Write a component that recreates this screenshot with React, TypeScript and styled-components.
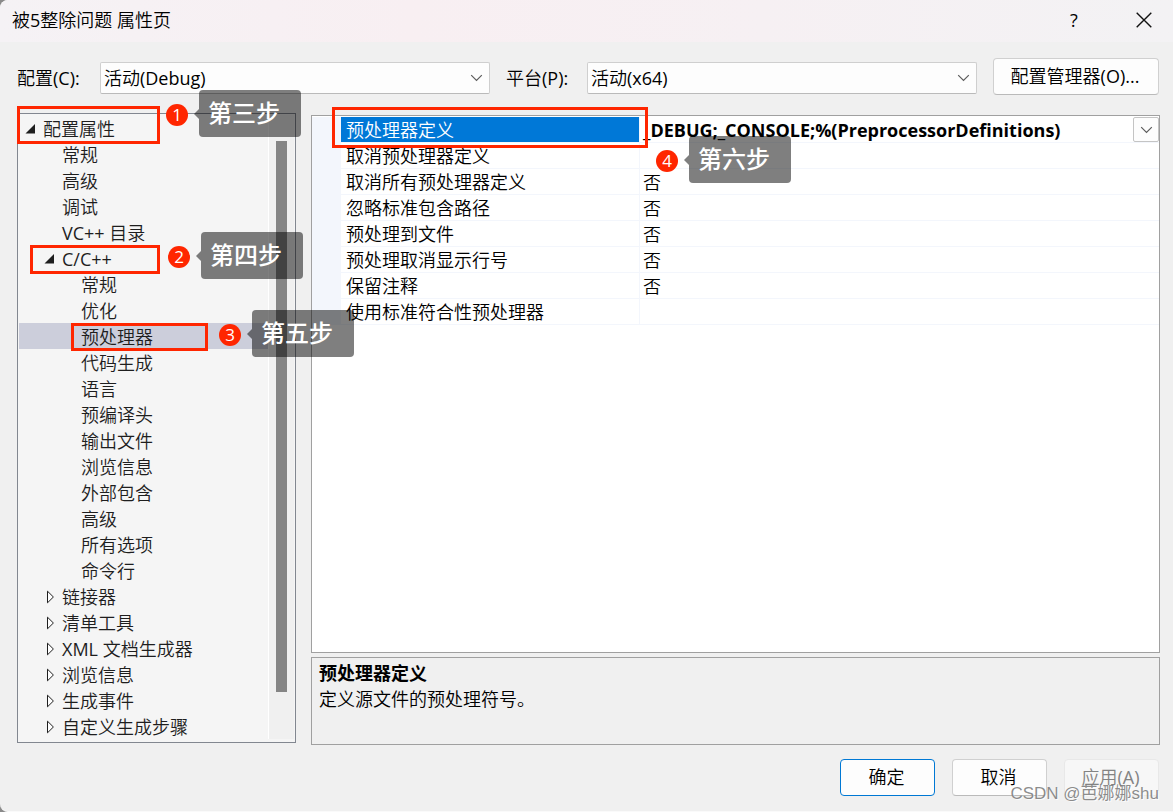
import React from "react";
import styled, { createGlobalStyle } from "styled-components";

const boldFont = '"Open Sans", "Noto Sans CJK SC", sans-serif';

const GlobalStyle = createGlobalStyle`
  * { box-sizing: border-box; }
  body {
    margin: 0;
    background: #8a8a8a;
  }
  body, button, select {
    font-family: "Open Sans", "Noto Sans CJK SC DemiLight", "Noto Sans CJK SC", sans-serif;
    font-size: 18px;
    font-weight: 400;
    line-height: 26px;
    color: #000;
  }
`;

const Dialog = styled.main`
  position: relative;
  display: flex;
  flex-direction: column;
  min-height: 100vh;
  background: #f0f0f0;
  border-bottom: 1px solid #fafafa;
  border-radius: 8px 0 0 8px;
  overflow: hidden;
`;

const TitleBar = styled.header`
  display: flex;
  align-items: center;
  height: 42px;
  padding: 0 12px 2px;
  background: linear-gradient(90deg, #f5f2f5, #f8eff2 35%, #f6f0f3 65%, #f3f2f4);
`;

const Title = styled.h1`
  flex: 1;
  margin: 0;
  font-size: 18px;
  font-weight: inherit;
`;

const CaptionButton = styled.button`
  display: flex;
  align-items: center;
  justify-content: center;
  width: 34px;
  height: 34px;
  margin-left: 36px;
  padding: 0;
  border: 0;
  background: none;
`;

const Toolbar = styled.div`
  display: flex;
  align-items: center;
  padding: 16px 14px 0 17px;
`;

const FieldLabel = styled.label<{ $width: number }>`
  flex: none;
  width: ${(p) => p.$width}px;
  padding-top: 2px;
  white-space: nowrap;
`;

const SelectBox = styled.div`
  position: relative;
  flex: 1;
  margin-top: 2px;
  margin-right: 16px;
`;

const Select = styled.select`
  display: block;
  appearance: none;
  width: 100%;
  height: 32px;
  padding: 0 30px 0 3px;
  border: 1px solid #cfcfcf;
  border-bottom-color: #bababa;
  border-radius: 2px;
  background: #fdfdfd;
`;

const SelectArrow = styled.span`
  position: absolute;
  top: 0;
  bottom: 0;
  right: 7px;
  display: flex;
  align-items: center;
  pointer-events: none;
`;

const PushButton = styled.button<{ $wide?: boolean; $primary?: boolean }>`
  flex: none;
  width: ${(p) => (p.$wide ? 166 : 95)}px;
  height: 37px;
  padding: 0 2px 1px 0;
  border: 1px solid ${(p) => (p.$primary ? "#0078d4" : "#d0d0d0")};
  border-bottom-color: ${(p) => (p.$primary ? "#0078d4" : "#bababa")};
  border-radius: 4px;
  background: #fdfdfd;
  white-space: nowrap;

  &:disabled {
    border-color: #e8e8e8;
    background: #f7f7f7;
    color: #838383;
  }
`;

const Body = styled.div`
  display: flex;
  flex: 1;
  gap: 15px;
  padding: 18px 13px 0 17px;
`;

const TreePanel = styled.nav`
  display: flex;
  flex: none;
  width: 279px;
  margin-bottom: 2px;
  padding: 1px 1px 3px;
  border: 1px solid #828790;
  background: #f5f5f5;
`;

const TreeList = styled.ul`
  flex: 1;
  min-width: 0;
  margin: 0;
  padding: 0;
  list-style: none;
`;

const TreeRow = styled.div<{ $level: number; $selected?: boolean }>`
  display: flex;
  align-items: center;
  height: 26px;
  padding-top: 1px;
  padding-left: ${(p) => 5 + p.$level * 19}px;
  background: ${(p) => (p.$selected ? "#cccedb" : "transparent")};
  color: #1e1e1e;
  white-space: nowrap;
`;

const Expander = styled.span`
  display: flex;
  align-items: center;
  flex: none;
  width: 19px;
`;

const ScrollTrack = styled.div`
  flex: none;
  width: 26px;
  padding: 26px 7px 47px;
  border-left: 1px solid #fff;
  background: #f0f0f0;
`;

const ScrollThumb = styled.div`
  height: 100%;
  background: #858585;
`;

const Details = styled.section`
  display: flex;
  flex: 1;
  flex-direction: column;
  gap: 4px;
  min-width: 0;
  padding-top: 2px;
`;

const GridPanel = styled.div`
  flex: 1;
  padding-top: 1px;
  border: 1px solid #a0a0a0;
  background: #fff;
`;

const PropertyTable = styled.table`
  width: 100%;
  border-spacing: 0;
  table-layout: fixed;
`;

const GutterCell = styled.td`
  width: 29px;
  padding: 0;
  background: #f3f6fc;
`;

const NameCell = styled.th<{ $selected?: boolean }>`
  width: 299px;
  height: 26px;
  padding: 2px 0 0 5px;
  border-right: 1px solid #f3f6fc;
  border-bottom: 1px solid #f3f6fc;
  background: ${(p) => (p.$selected ? "#0078d7" : "#fff")};
  background-clip: padding-box;
  color: ${(p) => (p.$selected ? "#fff" : "#000")};
  font-weight: inherit;
  line-height: 23px;
  text-align: left;
  white-space: nowrap;
`;

const ValueCell = styled.td<{ $bold?: boolean }>`
  height: 26px;
  padding: 0 0 0 3px;
  border-bottom: 1px solid #f3f6fc;
  font-weight: ${(p) => (p.$bold ? 700 : "inherit")};
  white-space: nowrap;
`;

const ValueContent = styled.div`
  display: flex;
  justify-content: space-between;
  height: 25px;
  line-height: 27px;
`;

const DropButton = styled.button`
  display: flex;
  align-items: center;
  justify-content: center;
  width: 26px;
  height: 25px;
  padding: 0;
  border: 1px solid #c4c4c4;
  border-radius: 2px;
  background: #fdfdfd;
`;

const HelpPanel = styled.div`
  height: 88px;
  padding: 2px 7px;
  border: 1px solid #a0a0a0;
`;

const HelpTitle = styled.h2`
  margin: 0;
  font-family: ${boldFont};
  font-size: 18px;
  font-weight: 700;
`;

const HelpText = styled.p`
  margin: 0;
`;

const Footer = styled.footer`
  display: flex;
  justify-content: flex-end;
  gap: 17px;
  padding: 14px 14px 15px;
`;

const Highlight = styled.div<{ $x: number; $y: number; $w: number; $h: number }>`
  position: absolute;
  left: ${(p) => p.$x}px;
  top: ${(p) => p.$y}px;
  width: ${(p) => p.$w}px;
  height: ${(p) => p.$h}px;
  border: 3px solid #ff2600;
  pointer-events: none;
`;

const Step = styled.div<{ $x: number; $y: number }>`
  position: absolute;
  left: ${(p) => p.$x}px;
  top: ${(p) => p.$y}px;
  display: flex;
  align-items: center;
  font-family: ${boldFont};
  font-weight: 500;
  pointer-events: none;
`;

const StepNumber = styled.span`
  width: 22px;
  height: 22px;
  margin-top: 2px;
  margin-right: 6px;
  border-radius: 50%;
  background: #ff2600;
  color: #fff;
  font-size: 17px;
  line-height: 22px;
  text-align: center;
`;

const StepPointer = styled.span`
  border: 5px solid transparent;
  border-left-width: 0;
  border-right-color: rgba(0, 0, 0, 0.5);
`;

const StepBubble = styled.span`
  width: 102px;
  height: 47px;
  padding-left: 9px;
  border-radius: 4px;
  background: rgba(0, 0, 0, 0.5);
  color: #fff;
  font-size: 24px;
  line-height: 46px;
  white-space: nowrap;
`;

const Watermark = styled.span`
  position: absolute;
  right: 14px;
  bottom: 4px;
  color: rgba(120, 120, 120, 0.85);
  font-family: "Liberation Sans", "Noto Sans CJK SC", sans-serif;
  font-size: 17px;
  text-shadow: 1px 1px 0 rgba(255, 255, 255, 0.8);
  pointer-events: none;
`;

const Chevron = () => (
  <svg width="13" height="8" viewBox="0 0 13 8" fill="none" stroke="#5c5c5c" strokeWidth="1.2" aria-hidden="true">
    <path d="M1.2 1.2 6.5 6.5l5.3-5.3" />
  </svg>
);

const CloseIcon = () => (
  <svg width="16" height="16" viewBox="0 0 16 16" stroke="#111" strokeWidth="1.4" aria-hidden="true">
    <path d="M.7.7l14.6 14.6M15.3.7.7 15.3" />
  </svg>
);

const OpenArrow = () => (
  <svg width="13" height="12" viewBox="0 0 13 12" aria-hidden="true">
    <path d="M11 1v9.5H1.5z" fill="#1e1e1e" />
  </svg>
);

const ClosedArrow = () => (
  <svg width="13" height="14" viewBox="0 0 13 14" aria-hidden="true">
    <path d="M4.5 1.2v11.6L10.4 7z" fill="#fff" stroke="#1e1e1e" />
  </svg>
);

type TreeNode = { label: string; level: number; state?: "open" | "closed"; selected?: boolean };

const tree: TreeNode[] = [
  { label: "配置属性", level: 0, state: "open" },
  { label: "常规", level: 1 },
  { label: "高级", level: 1 },
  { label: "调试", level: 1 },
  { label: "VC++ 目录", level: 1 },
  { label: "C/C++", level: 1, state: "open" },
  { label: "常规", level: 2 },
  { label: "优化", level: 2 },
  { label: "预处理器", level: 2, selected: true },
  { label: "代码生成", level: 2 },
  { label: "语言", level: 2 },
  { label: "预编译头", level: 2 },
  { label: "输出文件", level: 2 },
  { label: "浏览信息", level: 2 },
  { label: "外部包含", level: 2 },
  { label: "高级", level: 2 },
  { label: "所有选项", level: 2 },
  { label: "命令行", level: 2 },
  { label: "链接器", level: 1, state: "closed" },
  { label: "清单工具", level: 1, state: "closed" },
  { label: "XML 文档生成器", level: 1, state: "closed" },
  { label: "浏览信息", level: 1, state: "closed" },
  { label: "生成事件", level: 1, state: "closed" },
  { label: "自定义生成步骤", level: 1, state: "closed" },
];

const properties = [
  { name: "预处理器定义", value: "_DEBUG;_CONSOLE;%(PreprocessorDefinitions)", active: true },
  { name: "取消预处理器定义", value: "" },
  { name: "取消所有预处理器定义", value: "否" },
  { name: "忽略标准包含路径", value: "否" },
  { name: "预处理到文件", value: "否" },
  { name: "预处理取消显示行号", value: "否" },
  { name: "保留注释", value: "否" },
  { name: "使用标准符合性预处理器", value: "" },
];

const steps = [
  { text: "第三步", x: 166, y: 90, box: { $x: 17, $y: 106, $w: 143, $h: 38 } },
  { text: "第四步", x: 168, y: 232, box: { $x: 30, $y: 245, $w: 130, $h: 29 } },
  { text: "第五步", x: 219, y: 310, box: { $x: 71, $y: 323, $w: 137, $h: 28 } },
  { text: "第六步", x: 656, y: 136, box: { $x: 332, $y: 107, $w: 316, $h: 41 } },
];

export default function App() {
  return (
    <>
      <GlobalStyle />
      <Dialog>
        <TitleBar>
          <Title>被5整除问题 属性页</Title>
          <CaptionButton aria-label="帮助">?</CaptionButton>
          <CaptionButton aria-label="关闭">
            <CloseIcon />
          </CaptionButton>
        </TitleBar>

        <Toolbar>
          <FieldLabel htmlFor="config" $width={83}>配置(C):</FieldLabel>
          <SelectBox>
            <Select id="config">
              <option>活动(Debug)</option>
            </Select>
            <SelectArrow><Chevron /></SelectArrow>
          </SelectBox>
          <FieldLabel htmlFor="platform" $width={81}>平台(P):</FieldLabel>
          <SelectBox>
            <Select id="platform">
              <option>活动(x64)</option>
            </Select>
            <SelectArrow><Chevron /></SelectArrow>
          </SelectBox>
          <PushButton $wide>配置管理器(O)...</PushButton>
        </Toolbar>

        <Body>
          <TreePanel>
            <TreeList>
              {tree.map((node, i) => (
                <li key={i}>
                  <TreeRow $level={node.level} $selected={node.selected}>
                    <Expander>
                      {node.state === "open" && <OpenArrow />}
                      {node.state === "closed" && <ClosedArrow />}
                    </Expander>
                    {node.label}
                  </TreeRow>
                </li>
              ))}
            </TreeList>
            <ScrollTrack>
              <ScrollThumb />
            </ScrollTrack>
          </TreePanel>

          <Details>
            <GridPanel>
              <PropertyTable>
                <tbody>
                  {properties.map((p) => (
                    <tr key={p.name}>
                      <GutterCell />
                      <NameCell scope="row" $selected={p.active}>{p.name}</NameCell>
                      <ValueCell $bold={p.active}>
                        <ValueContent>
                          {p.value}
                          {p.active && (
                            <DropButton aria-label="展开">
                              <Chevron />
                            </DropButton>
                          )}
                        </ValueContent>
                      </ValueCell>
                    </tr>
                  ))}
                </tbody>
              </PropertyTable>
            </GridPanel>
            <HelpPanel>
              <HelpTitle>预处理器定义</HelpTitle>
              <HelpText>定义源文件的预处理符号。</HelpText>
            </HelpPanel>
          </Details>
        </Body>

        <Footer>
          <PushButton $primary>确定</PushButton>
          <PushButton>取消</PushButton>
          <PushButton disabled>应用(A)</PushButton>
        </Footer>

        {steps.map((s) => (
          <Highlight key={s.text} {...s.box} />
        ))}
        {steps.map((s, i) => (
          <Step key={s.text} $x={s.x} $y={s.y}>
            <StepNumber>{i + 1}</StepNumber>
            <StepPointer />
            <StepBubble>{s.text}</StepBubble>
          </Step>
        ))}
        <Watermark>CSDN @芭娜娜shu</Watermark>
      </Dialog>
    </>
  );
}
